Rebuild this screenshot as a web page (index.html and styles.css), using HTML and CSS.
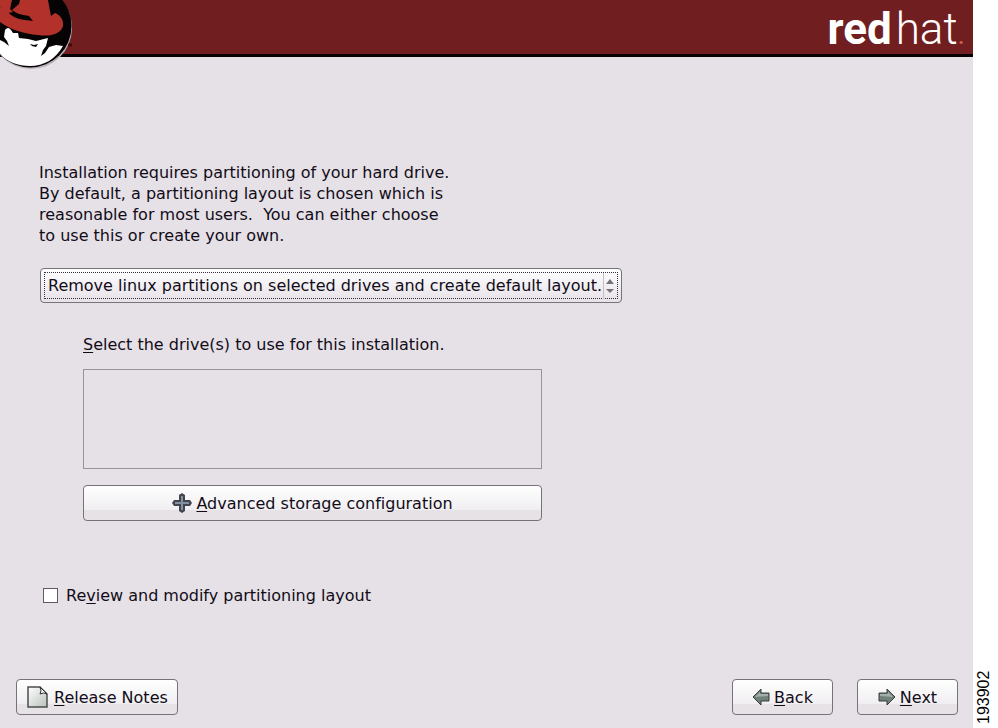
FILE: index.html
```html
<!DOCTYPE html>
<html lang="en">
<head>
  <meta charset="UTF-8">
  <meta name="viewport" content="width=device-width, initial-scale=1.0">
  <link rel="stylesheet" href="styles.css">
  <title>Red Hat Installer</title>
</head>
<body>
  <div class="installer">
    <header class="banner">
      <svg class="shadowman" width="76" height="70" viewBox="0 0 76 70" aria-hidden="true">
        <circle cx="31" cy="28" r="41" fill="#b9b2bb"/>
        <circle cx="30" cy="26" r="41.500" fill="#050303"/>
        <path d="M0 40 L4 42 L9 46 L7 41 L4 37 L5 30 Q8 26 11 30 L13 33 L18 33 L19 38 L28 39 L36 41 L48 38 L46 46 L43 50 L41 56 L45 53 L49 47 L56 45 L63 46 C56 59 44 66 30 66 C18 66 7 62 0 54 Z" fill="#fff"/>
        <path d="M30 44 L34 45 L38 44 L36 47 L32 46 Z" fill="#050303"/>
        <path d="M0 6 C4 9 8 12 11 15 C16 19 24 20 33 21 L29 16 C23 15 17 14 12 10 L19 4 L20 0 L48 0 C49 6 50 11 51 16 L55 13 C61 15 64 21 63 26 C61 34 50 37 38 35 C24 34 9 29 0 22 Z" fill="#b2322b"/>
        <path d="M0 0 H12 L10 9 L13 12 L8 13 L0 6 Z" fill="#b2322b"/>
        <circle cx="70" cy="45" r="2" fill="#45090c"/>
      </svg>
      <div class="wordmark"><b>red</b><span>hat</span><i>.</i></div>
    </header>

    <main class="content">
      <p class="intro">Installation requires partitioning of your hard drive.<br>
        By default, a partitioning layout is chosen which is<br>
        reasonable for most users.&nbsp; You can either choose<br>
        to use this or create your own.</p>

      <div class="layout-choice">
        <select class="layout-select" aria-label="Partitioning layout">
          <option>Remove linux partitions on selected drives and create default layout.</option>
        </select>
        <svg class="select-arrows" width="14" height="26" viewBox="0 0 14 26" aria-hidden="true">
          <path d="M0 0 H1 V26 H0 Z" fill="#c4bec6"/>
          <path d="M3 11 L7 6 L11 11 Z M3 16 L7 20 L11 16 Z" fill="#777079"/>
        </svg>
      </div>

      <section class="drives">
        <label class="drives-label" for="drives"><u>S</u>elect the drive(s) to use for this installation.</label>
        <select class="drive-list" id="drives" size="4" multiple></select>
        <button class="button" type="button">
          <svg width="20" height="20" viewBox="0 0 20 20" aria-hidden="true">
            <path d="M7 2 L10 0 L13 2 V7 H18 L20 10 L18 13 H13 V18 L10 20 L7 18 V13 H2 L0 10 L2 7 H7 Z" fill="#44464f"/>
            <path d="M9 3 H11 V9 H17 V11 H11 V17 H9 V11 H3 V9 H9 Z" fill="#8591a3"/>
          </svg>
          <span><u>A</u>dvanced storage configuration</span>
        </button>
      </section>

      <label class="review"><input type="checkbox"> <span>Re<u>v</u>iew and modify partitioning layout</span></label>
    </main>

    <footer class="actions">
      <button class="button notes" type="button">
        <svg width="24" height="24" viewBox="0 0 24 24" aria-hidden="true">
          <defs>
            <linearGradient id="page" x1="0" y1="0" x2="1" y2="1">
              <stop offset="0" stop-color="#fff"/>
              <stop offset="1" stop-color="#b9c1bc"/>
            </linearGradient>
          </defs>
          <path d="M2 2 H14 L21 9 V22 H2 Z" fill="url(#page)" stroke="#4b4e4d" stroke-width="1.500"/>
          <path d="M14 2 Q16 6 14 9 Q18 7 21 9 Z" fill="#f4f4f2" stroke="#2d302f"/>
        </svg>
        <span><u>R</u>elease Notes</span>
      </button>
      <button class="button nav" type="button">
        <svg width="18" height="18" viewBox="0 0 18 18" aria-hidden="true">
          <path d="M1 9 L9 1 V5 H17 V13 H9 V17 Z" fill="#6f8179" stroke="#353c39"/>
          <path d="M3 9 L8 4 V6 H16 V8 Z" fill="#a2b0a9"/>
        </svg>
        <span><u>B</u>ack</span>
      </button>
      <button class="button nav" type="button">
        <svg width="18" height="18" viewBox="0 0 18 18" aria-hidden="true">
          <path d="M17 9 L9 1 V5 H1 V13 H9 V17 Z" fill="#6f8179" stroke="#353c39"/>
          <path d="M15 9 L10 4 V6 H2 V8 Z" fill="#a2b0a9"/>
        </svg>
        <span><u>N</u>ext</span>
      </button>
    </footer>
  </div>
  <aside class="figure-number">193902</aside>
</body>
</html>
```

FILE: styles.css
```css
* {
  box-sizing: border-box;
}

body {
  margin: 0;
  display: flex;
  min-height: 100vh;
  background-color: #fff;
  color: #120c18;
  font-family: "DejaVu Sans", sans-serif;
  font-size: 16px;
  font-variant-ligatures: none;
  line-height: 21px;
}

u {
  text-decoration: underline;
  text-decoration-thickness: 1px;
  text-underline-offset: 2px;
}

.installer {
  flex: 1;
  display: flex;
  flex-direction: column;
  background-color: #e6e1e7;
}

.banner {
  display: flex;
  justify-content: space-between;
  height: 57px;
  background-color: #711e20;
  border-bottom: 3px solid #080203;
}

.shadowman {
  position: relative;
  flex: none;
}

.wordmark {
  padding-right: 8px;
  color: #fff;
  font-family: Roboto, sans-serif;
  font-size: 44px;
  line-height: 58px;
}

.wordmark span {
  font-weight: 300;
  margin-left: 4px;
}

.wordmark i {
  color: #d2604c;
  font-size: 28px;
  font-style: normal;
}

.content {
  flex: 1;
  padding: 105px 39px 0;
}

.intro {
  margin: 0 0 22px;
}

.layout-choice {
  position: relative;
  width: 582px;
  max-width: 100%;
  margin-left: 1px;
}

.layout-select {
  appearance: none;
  display: block;
  width: 100%;
  height: 35px;
  padding: 0 7px;
  border: 1px solid #77717a;
  border-radius: 4px;
  outline: 1px dotted #3a2f40;
  outline-offset: -5px;
  background: linear-gradient(#fff, #f0edf1 60%, #e6e1e7);
  color: inherit;
  font: inherit;
}

.select-arrows {
  position: absolute;
  right: 5px;
  top: 5px;
  pointer-events: none;
}

.drives {
  display: flex;
  flex-direction: column;
  width: 459px;
  max-width: 100%;
  margin: 31px 0 0 44px;
}

.drive-list {
  height: 100px;
  margin: 14px 0 16px;
  border: 1px solid #989299;
  border-radius: 0;
  background-color: #e6e1e7;
}

.button {
  display: flex;
  align-items: center;
  justify-content: center;
  gap: 4px;
  height: 36px;
  padding: 0 9px;
  border: 1px solid #77717a;
  border-radius: 4px;
  background: linear-gradient(#fff, #f0eef1 70%, #e6e2e6 72%, #e6e2e6);
  color: inherit;
  font: inherit;
}

.review {
  display: flex;
  align-items: center;
  gap: 8px;
  margin: 64px 0 0 4px;
}

.review input {
  appearance: none;
  width: 15px;
  height: 15px;
  margin: 0;
  border: 1px solid #5f5963;
  background-color: #fff;
}

.review input:checked {
  background-color: #5f5963;
}

.actions {
  display: flex;
  gap: 24px;
  padding: 0 15px 13px 16px;
}

.notes {
  margin-right: auto;
}

.nav {
  min-width: 101px;
}

.figure-number {
  width: 25px;
  padding: 4px 0 4px 4px;
  writing-mode: vertical-rl;
  transform: rotate(180deg);
  color: #000;
  font-family: "Liberation Sans", sans-serif;
  font-size: 16px;
}
```
